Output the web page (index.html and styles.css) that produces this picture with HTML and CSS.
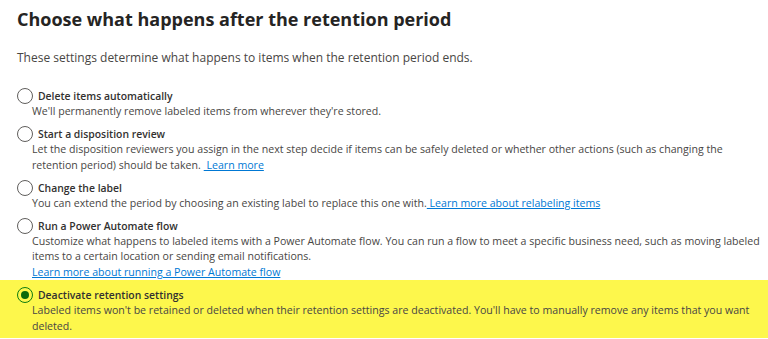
FILE: index.html
```html
<!DOCTYPE html>
<html lang="en">
<head>
<meta charset="utf-8">
<title>Retention</title>
<link rel="stylesheet" href="styles.css">
</head>
<body>
<main class="page">
  <h1 class="title">Choose what happens after the retention period</h1>
  <p class="intro">These settings determine what happens to items when the retention period ends.</p>
  <div class="options">
    <div class="option">
      <div class="head"><span class="radio"></span><span class="label">Delete items automatically</span></div>
      <div class="desc">We'll permanently remove labeled items from wherever they're stored.</div>
    </div>
    <div class="option">
      <div class="head"><span class="radio"></span><span class="label">Start a disposition review</span></div>
      <div class="desc">Let the disposition reviewers you assign in the next step decide if items can be safely deleted or whether other actions (such as changing the retention period) should be taken.<a class="link spaced" href="#"> Learn more</a></div>
    </div>
    <div class="option">
      <div class="head"><span class="radio"></span><span class="label">Change the label</span></div>
      <div class="desc">You can extend the period by choosing an existing label to replace this one with.<a class="link" href="#"> Learn more about relabeling items</a></div>
    </div>
    <div class="option">
      <div class="head"><span class="radio"></span><span class="label">Run a Power Automate flow</span></div>
      <div class="desc">Customize what happens to labeled items with a Power Automate flow. You can run a flow to meet a specific business need, such as moving labeled items to a certain location or sending email notifications.<br><a class="link" href="#">Learn more about running a Power Automate flow</a></div>
    </div>
    <div class="option selected">
      <div class="head"><span class="radio checked"></span><span class="label">Deactivate retention settings</span></div>
      <div class="desc">Labeled items won't be retained or deleted when their retention settings are deactivated. You'll have to manually remove any items that you want deleted.</div>
    </div>
  </div>
</main>
</body>
</html>
```
FILE: styles.css
```css
html, body {
  margin: 0;
  padding: 0;
  background: #ffffff;
}
body {
  font-family: "Open Sans", "Noto Sans", sans-serif;
  color: #323130;
  width: 768px;
  height: 339px;
  overflow: hidden;
}
.page {
  padding-top: 5px;
}
.title {
  margin: 0;
  padding-left: 17px;
  font-size: 18px;
  font-weight: 700;
  line-height: 28px;
  color: #252423;
}
.intro {
  margin: 17px 0 0;
  padding-left: 17px;
  font-size: 12px;
  line-height: 16px;
  color: #484644;
}
.options {
  margin-top: 22px;
  display: flex;
  flex-direction: column;
}
.option {
  padding-left: 17px;
  padding-right: 0;
  margin-top: 6.5px;
}
.option:first-child {
  margin-top: 0;
}
.head {
  display: flex;
  align-items: center;
  gap: 5px;
  height: 16px;
  margin-bottom: 0;
}
.radio {
  box-sizing: border-box;
  width: 16px;
  height: 16px;
  border-radius: 50%;
  border: 1px solid #605e5c;
  background: #fff;
  flex: none;
  display: flex;
  align-items: center;
  justify-content: center;
}
.radio.checked {
  border-color: #107c10;
  background: transparent;
}
.radio.checked::after {
  content: "";
  width: 8px;
  height: 8px;
  border-radius: 50%;
  background: #0b6a0b;
}
.label {
  font-size: 10.4px;
  font-weight: 600;
  color: #323130;
}
.desc {
  margin-left: 15px;
  font-size: 10.6px;
  line-height: 15.5px;
  color: #484644;
}
.link {
  color: #0078d4;
  text-decoration: underline;
}
.link.spaced {
  margin-left: 3px;
}
.option.selected {
  margin-top: 0;
  background: #fdf74c;
  padding-top: 7px;
  padding-bottom: 4px;
}
```
